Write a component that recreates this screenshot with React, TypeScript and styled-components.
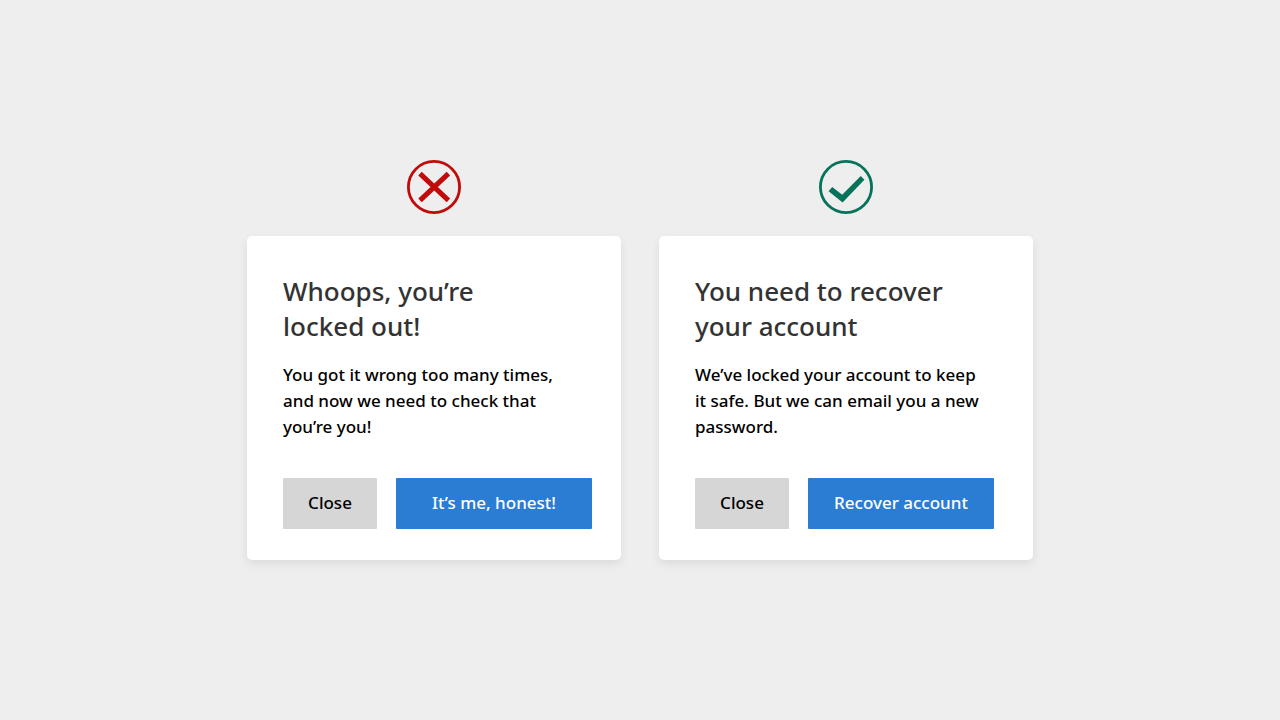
import React from "react";
import styled, { createGlobalStyle } from "styled-components";

const GlobalStyle = createGlobalStyle`
  *, *::before, *::after { box-sizing: border-box; }
  body {
    margin: 0;
    background: #eeeeee;
    font-family: "Noto Sans", "Open Sans", sans-serif;
    font-weight: 500;
    color: #000000;
  }
`;

const Page = styled.main`
  min-height: 100vh;
  display: flex;
  flex-wrap: wrap;
  align-items: center;
  align-content: center;
  justify-content: center;
  gap: 38px;
`;

const Example = styled.section`
  display: flex;
  flex-direction: column;
  align-items: center;
  gap: 22px;
`;

const Mark = styled.svg`
  display: block;
  width: 54px;
  height: 54px;
  fill: none;
`;

const Card = styled.article`
  width: 374px;
  max-width: 100vw;
  padding: 38px 28px 31px 36px;
  background: #ffffff;
  border-radius: 5px;
  box-shadow: 0 4px 10px rgba(0, 0, 0, 0.08);
`;

const Title = styled.h2`
  margin: 0 0 18px;
  font-size: 26px;
  line-height: 35px;
  font-weight: 500;
  color: #333333;
`;

const Message = styled.p`
  margin: 0 0 38px;
  font-size: 17px;
  line-height: 26px;
`;

const Line = styled.span`
  display: block;
  white-space: nowrap;
`;

const Actions = styled.div`
  display: flex;
  gap: 19px;
`;

const Button = styled.button<{ $primary?: boolean; $width: number }>`
  width: ${(p) => p.$width}px;
  height: 51px;
  padding: 0 0 2px;
  border: 0;
  border-radius: 1px;
  background: ${(p) => (p.$primary ? "#2b7cd3" : "#d6d6d6")};
  color: ${(p) => (p.$primary ? "#ffffff" : "#000000")};
  font: inherit;
  font-size: 17px;
  line-height: 26px;
  white-space: nowrap;
  cursor: pointer;
`;

const CrossMark = () => (
  <Mark viewBox="0 0 54 54" role="img" aria-label="Avoid" stroke="#c20a0a">
    <circle cx="27" cy="27" r="25.6" strokeWidth="2.8" />
    <path d="M13 13.6L41.4 40.4M41.4 13.6L13 40.4" strokeWidth="5" />
  </Mark>
);

const TickMark = () => (
  <Mark viewBox="0 0 54 54" role="img" aria-label="Recommended">
    <circle cx="27" cy="27" r="25.6" stroke="#05735a" strokeWidth="2.8" />
    <path d="M9.6 31.2L13.2 27L23.2 34.8L41.8 16L45.4 19.8L23.6 42.4Z" fill="#05735a" />
  </Mark>
);

interface DialogProps {
  mark: React.ReactNode;
  title: string[];
  message: string[];
  action: string;
  actionWidth: number;
}

const Dialog = ({ mark, title, message, action, actionWidth }: DialogProps) => (
  <Example>
    {mark}
    <Card>
      <Title>
        {title.map((line) => (
          <Line key={line}>{line}</Line>
        ))}
      </Title>
      <Message>
        {message.map((line) => (
          <Line key={line}>{line}</Line>
        ))}
      </Message>
      <Actions>
        <Button type="button" $width={94}>Close</Button>
        <Button type="button" $primary $width={actionWidth}>{action}</Button>
      </Actions>
    </Card>
  </Example>
);

export default function App() {
  return (
    <>
      <GlobalStyle />
      <Page>
        <Dialog
          mark={<CrossMark />}
          title={["Whoops, you’re", "locked out!"]}
          message={["You got it wrong too many times,", "and now we need to check that", "you’re you!"]}
          action="It’s me, honest!"
          actionWidth={196}
        />
        <Dialog
          mark={<TickMark />}
          title={["You need to recover", "your account"]}
          message={["We’ve locked your account to keep", "it safe. But we can email you a new", "password."]}
          action="Recover account"
          actionWidth={186}
        />
      </Page>
    </>
  );
}
